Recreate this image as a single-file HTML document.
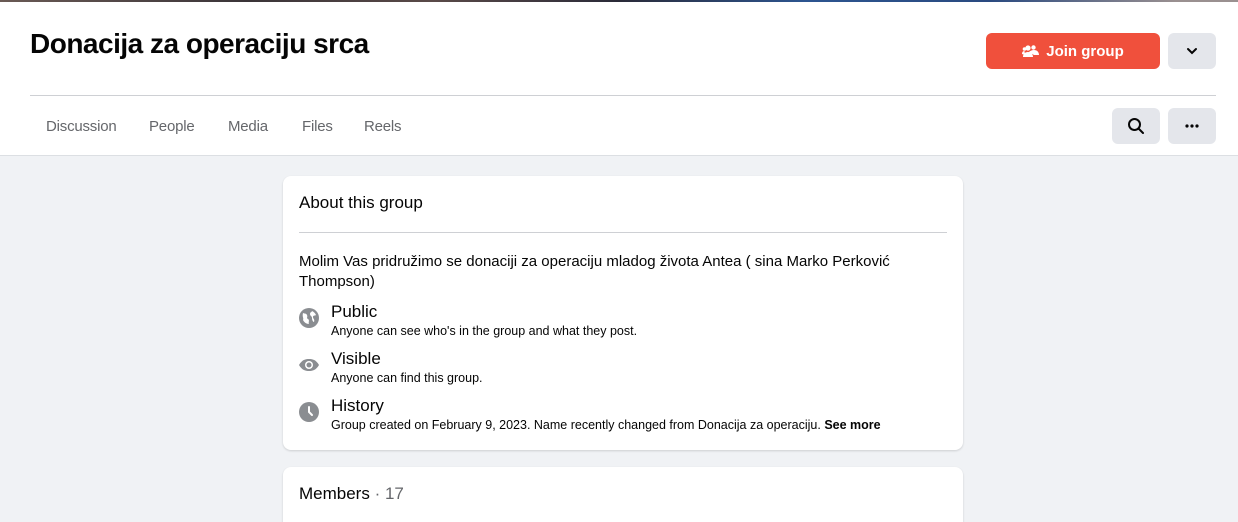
<!DOCTYPE html>
<html><head><meta charset="utf-8"><style>
*{box-sizing:border-box;margin:0;padding:0}
html,body{width:1238px;height:522px;overflow:hidden}
body{background:#f0f2f5;font-family:"Liberation Sans",sans-serif;color:#050505;position:relative}
.top{position:absolute;left:0;top:0;width:1238px;height:156px;background:#fff;border-bottom:1px solid #dcdfe3}
.strip{position:absolute;left:0;top:0;width:1238px;height:2px;background:linear-gradient(90deg,#6a5a55,#3a3438 20%,#5a4a48 35%,#2a2a38 50%,#2c5590 65%,#2a4a80 80%,#9a9090 95%)}
h1{position:absolute;left:30px;top:28px;font-size:28px;font-weight:bold;letter-spacing:-0.5px}
.join{position:absolute;left:986px;top:33px;width:174px;height:36px;background:#f0503c;border-radius:6px;color:#fff;font-size:15px;font-weight:bold;display:flex;align-items:center;justify-content:center;gap:6px}
.gbtn{position:absolute;background:#e4e6eb;border-radius:6px;display:flex;align-items:center;justify-content:center}
.hr{position:absolute;left:30px;top:95px;width:1186px;height:1px;background:#ced0d4}
.tabs{position:absolute;top:118px;font-size:15px;color:#65676b;letter-spacing:-0.2px}
.card{position:absolute;left:283px;width:680px;background:#fff;border-radius:8px;box-shadow:0 1px 2px rgba(0,0,0,.15)}
.t{font-size:17px;position:absolute;left:16px}
.row{position:absolute;left:16px}
.row .ic{position:absolute;left:0;top:6px}
.row .h{position:absolute;left:32px;top:0;font-size:17px}
.row .s{position:absolute;left:32px;top:22px;font-size:12.5px;white-space:nowrap}
</style></head><body>
<div class="top">
<div class="strip"></div>
<h1>Donacija za operaciju srca</h1>
<div class="join"><svg width="18" height="14" viewBox="0 0 18 14"><circle cx="6" cy="4" r="2.6" fill="#fff"/><circle cx="11.5" cy="3.5" r="2.2" fill="#fff"/><circle cx="2.5" cy="5" r="1.8" fill="#fff"/><path d="M1 13c0-3 2-5 5-5s5 2 5 5z M7 8c1-1 3-2 5-2 3 0 5 2 5 5h-5z M0 10c0-2 1-3 2.5-3L3 11z" fill="#fff"/></svg>Join group</div>
<div class="gbtn" style="left:1168px;top:33px;width:48px;height:36px"><svg width="12" height="8" viewBox="0 0 12 8"><path d="M2 2l4 4 4-4" stroke="#050505" stroke-width="2" fill="none" stroke-linecap="round"/></svg></div>
<div class="hr"></div>
<div class="tabs" style="left:46px">Discussion</div>
<div class="tabs" style="left:149px">People</div>
<div class="tabs" style="left:228px">Media</div>
<div class="tabs" style="left:302px">Files</div>
<div class="tabs" style="left:364px">Reels</div>
<div class="gbtn" style="left:1112px;top:108px;width:48px;height:36px"><svg width="18" height="18" viewBox="0 0 18 18"><circle cx="7.5" cy="7.5" r="5.5" stroke="#050505" stroke-width="2" fill="none"/><path d="M11.5 11.5l4.5 4.5" stroke="#050505" stroke-width="2" stroke-linecap="round"/></svg></div>
<div class="gbtn" style="left:1168px;top:108px;width:48px;height:36px"><svg width="14" height="4" viewBox="0 0 14 4"><circle cx="2" cy="2" r="1.6" fill="#050505"/><circle cx="7" cy="2" r="1.6" fill="#050505"/><circle cx="12" cy="2" r="1.6" fill="#050505"/></svg></div>
</div>
<div class="card" style="top:176px;height:274px">
<div class="t" style="top:17px">About this group</div>
<div style="position:absolute;left:16px;top:56px;width:648px;height:1px;background:#ced0d4"></div>
<div style="position:absolute;left:16px;top:76px;font-size:15px;line-height:20px;width:640px">Molim Vas pridružimo se donaciji za operaciju mladog života Antea ( sina Marko Perković Thompson)</div>
<div class="row" style="top:126px"><svg class="ic" width="20" height="20" viewBox="0 0 20 20"><circle cx="10" cy="10" r="10" fill="#8a8d91"/><path d="M4 5c2 1 3 0 4 2s-1 3 1 4 0 4 1 5c-3 0-5-2-6-4 1-2-1-3 0-7zM13 3c2 1 3 2 4 4-1 1-3 0-3 2s2 2 1 5c-1 0-2-2-2-4s-2-2-2-4 2-2 2-3z" fill="#fff"/></svg><div class="h">Public</div><div class="s">Anyone can see who's in the group and what they post.</div></div>
<div class="row" style="top:173px"><svg class="ic" width="20" height="20" viewBox="0 0 20 20"><path d="M0 10c3-5 6-6 10-6s7 1 10 6c-3 5-6 6-10 6S3 15 0 10z" fill="#8a8d91"/><circle cx="10" cy="10" r="4" fill="#fff"/><circle cx="10" cy="10" r="2.5" fill="#8a8d91"/></svg><div class="h">Visible</div><div class="s">Anyone can find this group.</div></div>
<div class="row" style="top:220px"><svg class="ic" width="20" height="20" viewBox="0 0 20 20"><circle cx="10" cy="10" r="10" fill="#8a8d91"/><path d="M10 5v5l3 3" stroke="#fff" stroke-width="2" fill="none" stroke-linecap="round"/></svg><div class="h">History</div><div class="s">Group created on February 9, 2023. Name recently changed from Donacija za operaciju. <b>See more</b></div></div>
</div>
<div class="card" style="top:467px;height:70px">
<div class="t" style="top:17px">Members <span style="color:#65676b">· 17</span></div>
</div>
</body></html>
